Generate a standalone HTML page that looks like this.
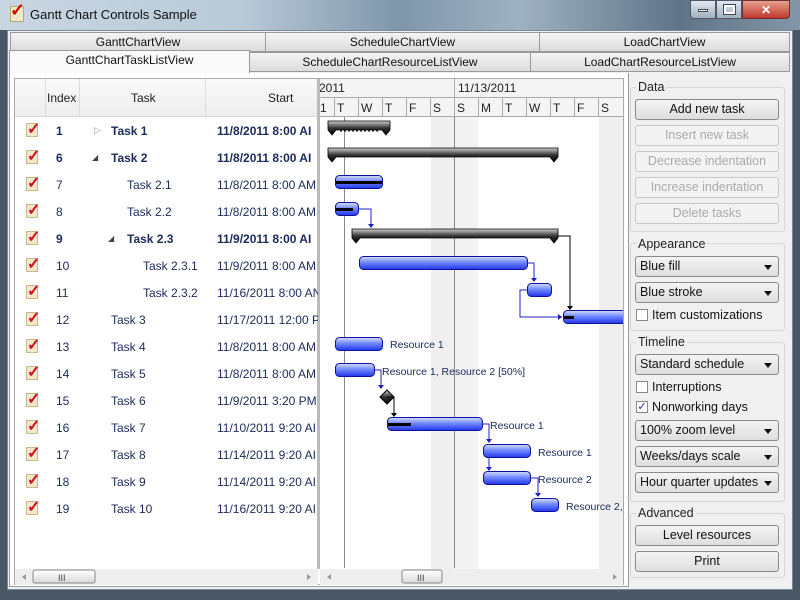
<!DOCTYPE html>
<html><head><meta charset="utf-8"><style>
*{margin:0;padding:0;box-sizing:border-box}
body{width:800px;height:600px;overflow:hidden;background:#4a5866;font-family:"Liberation Sans",sans-serif;font-size:12px;position:relative}
.abs{position:absolute}
.title{left:0;top:0;width:800px;height:30px;background:linear-gradient(90deg,#c9d6e2 0%,#b9cad8 30%,#7f96aa 50%,#9fb2c2 65%,#5f7488 85%,#8497a8 100%)}
.win{left:7px;top:30px;width:786px;height:560px;background:#f0f0f0;border:1px solid #7a8a9a}
.tab{position:absolute;height:20px;border:1px solid #999;background:linear-gradient(#f4f4f4,#dcdcdc);text-align:center;line-height:18px;font-size:12px;color:#111}
.btn{position:absolute;left:635px;width:144px;height:21px;border:1px solid #8a8a8a;border-radius:3px;background:linear-gradient(#f4f4f4,#dedede);text-align:center;line-height:19px;font-size:12.5px;color:#111}
.dis{color:#aaa;border-color:#c8c8c8;background:#f3f3f3}
.dd{text-align:left;padding-left:4px}
.dd:after{content:"";position:absolute;right:6px;top:8px;border:4px solid transparent;border-top:5px solid #111}
.grp{position:absolute;left:630px;width:155px;border:1px solid #d6d6d6;border-radius:3px}
.lbl{position:absolute;left:636px;font-size:12.5px;color:#222;background:#f0f0f0;padding:0 2px}
.cb{position:absolute;left:636px;width:12px;height:12px;border:1px solid #888;background:#fff}
.row{position:absolute;left:15px;width:303px;height:27px;font-size:12px;color:#1b2a5c;overflow:hidden}
.row span{position:absolute;top:7px;white-space:nowrap}
.b{font-weight:bold}
.chk{position:absolute;left:11px;top:6px;width:12px;height:14px;background:#f1e8c8;border:1px solid #c9b98a}
.chk:after{content:"✓";position:absolute;left:0;top:-5px;color:#d0102a;font-size:16px;font-weight:bold}
</style></head><body>
<div class="abs title"></div>
<div class="abs" style="left:10px;top:6px;width:14px;height:16px;background:#f1e8c8;border:1px solid #b9a870"></div>
<div class="abs" style="left:10px;top:0px;color:#c00;font-size:18px;font-weight:bold">✓</div>
<div class="abs" style="left:30px;top:7px;font-size:13px;color:#111">Gantt Chart Controls Sample</div>
<div class="abs" style="left:690px;top:0;width:26px;height:19px;border:1px solid #556;border-radius:0 0 0 4px;background:linear-gradient(#dfe8f0,#9fb0c0)"></div>
<div class="abs" style="left:716px;top:0;width:26px;height:19px;border:1px solid #556;background:linear-gradient(#dfe8f0,#9fb0c0)"></div>
<div class="abs" style="left:742px;top:0;width:48px;height:19px;border:1px solid #633;border-radius:0 0 4px 0;background:linear-gradient(#e8a090,#c0382a);color:#fff;text-align:center;font-weight:bold;line-height:18px">✕</div>
<div class="abs" style="left:698px;top:9px;width:10px;height:3px;background:#fff;border:1px solid #445"></div>
<div class="abs" style="left:724px;top:5px;width:11px;height:9px;border:2px solid #fff;outline:1px solid #445"></div>
<div class="abs win"></div>
<div class="tab" style="left:10px;top:32px;width:256px">GanttChartView</div>
<div class="tab" style="left:265px;top:32px;width:275px">ScheduleChartView</div>
<div class="tab" style="left:539px;top:32px;width:251px">LoadChartView</div>
<div class="tab" style="left:249px;top:52px;width:282px">ScheduleChartResourceListView</div>
<div class="tab" style="left:530px;top:52px;width:260px">LoadChartResourceListView</div>
<div class="tab" style="left:9px;top:50px;width:241px;height:24px;background:#fafafa;border-bottom:none">GanttChartTaskListView</div>
<div class="abs" style="left:9px;top:73px;width:620px;height:514px;border:1px solid #999;background:#fff;border-top:none"></div>
<div class="abs" style="left:14px;top:78px;width:610px;height:507px;border:1px solid #aaa;background:#fff"></div>
<div class="abs" style="left:15px;top:79px;width:303px;height:38px;background:linear-gradient(#fafafa,#ededed);border-bottom:1px solid #d8d8d8"></div>
<div class="abs" style="left:45px;top:79px;width:1px;height:38px;background:#ddd"></div>
<div class="abs" style="left:79px;top:79px;width:1px;height:38px;background:#ddd"></div>
<div class="abs" style="left:205px;top:79px;width:1px;height:38px;background:#ddd"></div>
<div class="abs" style="left:47px;top:91px;color:#222">Index</div>
<div class="abs" style="left:131px;top:91px;color:#222">Task</div>
<div class="abs" style="left:268px;top:91px;color:#222">Start</div>
<div class="abs" style="left:317px;top:79px;width:3px;height:490px;background:#bbb"></div>

<div class="row" style="top:117px"><div class="chk"></div><span class="b" style="left:41px">1</span><span style="left:79px;color:#999;font-size:9px;top:8px">▷</span><span class="b" style="left:96px">Task 1</span><span class="b" style="left:202px">11/8/2011 8:00 AI</span></div>
<div class="row" style="top:144px"><div class="chk"></div><span class="b" style="left:41px">6</span><span style="left:77px;color:#444;font-size:8px;top:9px">◢</span><span class="b" style="left:96px">Task 2</span><span class="b" style="left:202px">11/8/2011 8:00 AI</span></div>
<div class="row" style="top:171px"><div class="chk"></div><span style="left:41px">7</span><span style="left:112px">Task 2.1</span><span style="left:202px">11/8/2011 8:00 AM</span></div>
<div class="row" style="top:198px"><div class="chk"></div><span style="left:41px">8</span><span style="left:112px">Task 2.2</span><span style="left:202px">11/8/2011 8:00 AM</span></div>
<div class="row" style="top:225px"><div class="chk"></div><span class="b" style="left:41px">9</span><span style="left:93px;color:#444;font-size:8px;top:9px">◢</span><span class="b" style="left:112px">Task 2.3</span><span class="b" style="left:202px">11/9/2011 8:00 AI</span></div>
<div class="row" style="top:252px"><div class="chk"></div><span style="left:41px">10</span><span style="left:128px">Task 2.3.1</span><span style="left:202px">11/9/2011 8:00 AM</span></div>
<div class="row" style="top:279px"><div class="chk"></div><span style="left:41px">11</span><span style="left:128px">Task 2.3.2</span><span style="left:202px">11/16/2011 8:00 AN</span></div>
<div class="row" style="top:306px"><div class="chk"></div><span style="left:41px">12</span><span style="left:96px">Task 3</span><span style="left:202px">11/17/2011 12:00 P</span></div>
<div class="row" style="top:333px"><div class="chk"></div><span style="left:41px">13</span><span style="left:96px">Task 4</span><span style="left:202px">11/8/2011 8:00 AM</span></div>
<div class="row" style="top:360px"><div class="chk"></div><span style="left:41px">14</span><span style="left:96px">Task 5</span><span style="left:202px">11/8/2011 8:00 AM</span></div>
<div class="row" style="top:387px"><div class="chk"></div><span style="left:41px">15</span><span style="left:96px">Task 6</span><span style="left:202px">11/9/2011 3:20 PM</span></div>
<div class="row" style="top:414px"><div class="chk"></div><span style="left:41px">16</span><span style="left:96px">Task 7</span><span style="left:202px">11/10/2011 9:20 AI</span></div>
<div class="row" style="top:441px"><div class="chk"></div><span style="left:41px">17</span><span style="left:96px">Task 8</span><span style="left:202px">11/14/2011 9:20 AI</span></div>
<div class="row" style="top:468px"><div class="chk"></div><span style="left:41px">18</span><span style="left:96px">Task 9</span><span style="left:202px">11/14/2011 9:20 AI</span></div>
<div class="row" style="top:495px"><div class="chk"></div><span style="left:41px">19</span><span style="left:96px">Task 10</span><span style="left:202px">11/16/2011 9:20 AI</span></div>

<svg class="abs" style="left:0;top:0" width="800" height="600" font-family="Liberation Sans" font-size="12">
<defs>
<linearGradient id="bl" x1="0" y1="0" x2="0" y2="1"><stop offset="0" stop-color="#d6e0ff"/><stop offset="0.45" stop-color="#7088ff"/><stop offset="1" stop-color="#2236e8"/></linearGradient>
<linearGradient id="bk" x1="0" y1="0" x2="0" y2="1"><stop offset="0" stop-color="#d0d0d0"/><stop offset="0.5" stop-color="#333"/><stop offset="1" stop-color="#000"/></linearGradient>
<linearGradient id="sb" x1="0" y1="0" x2="0" y2="1"><stop offset="0" stop-color="#fff"/><stop offset="1" stop-color="#d8d8d8"/></linearGradient>
<clipPath id="cc"><rect x="320" y="79" width="303" height="490"/></clipPath>
</defs>
<g clip-path="url(#cc)">
<rect x="320" y="79" width="303" height="38" fill="#f4f4f4"/>
<line x1="320" y1="97.5" x2="623" y2="97.5" stroke="#aaa"/>
<line x1="320" y1="116.5" x2="623" y2="116.5" stroke="#aaa"/>
<text x="319" y="92" fill="#222">2011</text><text x="458" y="92" fill="#222">11/13/2011</text>
<line x1="454.5" y1="79" x2="454.5" y2="117" stroke="#aaa"/>
<g stroke="#aaa"><line x1="334.5" y1="98" x2="334.5" y2="117"/><line x1="358.5" y1="98" x2="358.5" y2="117"/><line x1="382.5" y1="98" x2="382.5" y2="117"/><line x1="406.5" y1="98" x2="406.5" y2="117"/><line x1="430.5" y1="98" x2="430.5" y2="117"/><line x1="478.5" y1="98" x2="478.5" y2="117"/><line x1="502.5" y1="98" x2="502.5" y2="117"/><line x1="526.5" y1="98" x2="526.5" y2="117"/><line x1="550.5" y1="98" x2="550.5" y2="117"/><line x1="574.5" y1="98" x2="574.5" y2="117"/><line x1="598.5" y1="98" x2="598.5" y2="117"/></g>
<g fill="#222"><text x="320" y="112">1</text><text x="337" y="112">T</text><text x="361" y="112">W</text><text x="385" y="112">T</text><text x="409" y="112">F</text><text x="433" y="112">S</text><text x="457" y="112">S</text><text x="481" y="112">M</text><text x="505" y="112">T</text><text x="529" y="112">W</text><text x="553" y="112">T</text><text x="577" y="112">F</text><text x="601" y="112">S</text></g>
<rect x="431" y="117" width="23" height="452" fill="#efefef"/>
<rect x="455" y="117" width="23" height="452" fill="#f3f3f3"/>
<rect x="599" y="117" width="24" height="452" fill="#efefef"/>
<line x1="344.5" y1="117" x2="344.5" y2="568" stroke="#888"/>
<line x1="454.5" y1="117" x2="454.5" y2="568" stroke="#888"/>
<g fill="url(#bk)" stroke="#000" stroke-width="0.8">
<path d="M328 121h62v9l-4 5-4-5h-46l-4 5-4-5z"/>
<path d="M328 148h230v9l-4 5-4-5h-214l-4 5-4-5z"/>
<path d="M352 229h206v9l-4 5-4-5h-190l-4 5-4-5z"/>
</g>
<line x1="340" y1="131" x2="380" y2="131" stroke="#000" stroke-dasharray="2,2"/>
<g fill="url(#bl)" stroke="#1010a0" stroke-width="1">
<rect x="335.5" y="175.5" width="47" height="13" rx="4"/>
<rect x="335.5" y="202.5" width="23" height="13" rx="4"/>
<rect x="359.5" y="256.5" width="168" height="13" rx="4"/>
<rect x="527.5" y="283.5" width="24" height="13" rx="4"/>
<rect x="563.5" y="310.5" width="70" height="13" rx="4"/>
<rect x="335.5" y="337.5" width="47" height="13" rx="4"/>
<rect x="335.5" y="363.5" width="39" height="13" rx="4"/>
<rect x="387.5" y="417.5" width="95" height="13" rx="4"/>
<rect x="483.5" y="444.5" width="47" height="13" rx="4"/>
<rect x="483.5" y="471.5" width="47" height="13" rx="4"/>
<rect x="531.5" y="498.5" width="27" height="13" rx="4"/>
</g>
<g fill="#000"><rect x="336" y="181" width="46" height="3"/><rect x="336" y="208" width="17" height="3"/><rect x="564" y="316" width="10" height="3"/><rect x="388" y="423" width="23" height="3"/></g>
<path d="M380 397l7-7 7 7-7 7z" fill="url(#bk)" stroke="#000"/>
<g stroke="#2020c0" fill="none"><path d="M358 209h13v18"/><path d="M527 263h7v18"/><path d="M527 290h-7v27h42"/><path d="M375 370h6v18"/><path d="M482 424h7v18"/><path d="M489 458v12"/><path d="M531 478h7v18"/></g>
<g stroke="#000" fill="none"><path d="M558 236h12v73"/><path d="M387 397h7v19"/></g>
<g fill="#2020c0"><path d="M368 224h6l-3 4z"/><path d="M531 278h6l-3 4z"/><path d="M558 314v6l4-3z"/><path d="M378 385h6l-3 4z"/><path d="M486 439h6l-3 4z"/><path d="M486 467h6l-3 4z"/><path d="M535 493h6l-3 4z"/></g>
<g fill="#000"><path d="M567 306h6l-3 4z"/><path d="M391 413h6l-3 4z"/></g>
<g fill="#1b2a5c" font-size="10.5"><text x="390" y="348">Resource 1</text><text x="382" y="375">Resource 1, Resource 2 [50%]</text><text x="490" y="429">Resource 1</text><text x="538" y="456">Resource 1</text><text x="538" y="483">Resource 2</text><text x="566" y="510">Resource 2,</text></g>
</g>
<rect x="15" y="569" width="303" height="16" fill="#eee"/>
<rect x="320" y="569" width="303" height="16" fill="#eee"/>
<rect x="33" y="570" width="62" height="13" rx="2" fill="url(#sb)" stroke="#888"/>
<rect x="402" y="570" width="40" height="13" rx="2" fill="url(#sb)" stroke="#888"/>
<text x="58" y="581" font-size="9" fill="#444">III</text><text x="417" y="581" font-size="9" fill="#444">III</text>
<g fill="#999"><path d="M22 577l4-3v6z"/><path d="M311 577l-4-3v6z"/><path d="M327 577l4-3v6z"/><path d="M617 577l-4-3v6z"/></g>
</svg>

<div class="grp" style="top:87px;height:145px"></div>
<div class="lbl" style="top:80px">Data</div>
<div class="btn" style="top:99px">Add new task</div>
<div class="btn dis" style="top:125px">Insert new task</div>
<div class="btn dis" style="top:151px">Decrease indentation</div>
<div class="btn dis" style="top:177px">Increase indentation</div>
<div class="btn dis" style="top:203px">Delete tasks</div>
<div class="grp" style="top:243px;height:88px"></div>
<div class="lbl" style="top:237px">Appearance</div>
<div class="btn dd" style="top:256px">Blue fill</div>
<div class="btn dd" style="top:282px">Blue stroke</div>
<div class="cb" style="top:309px"></div>
<div class="abs" style="left:652px;top:308px;font-size:12.5px;color:#111">Item customizations</div>
<div class="grp" style="top:342px;height:160px"></div>
<div class="lbl" style="top:335px">Timeline</div>
<div class="btn dd" style="top:354px">Standard schedule</div>
<div class="cb" style="top:381px"></div>
<div class="abs" style="left:652px;top:380px;font-size:12.5px;color:#111">Interruptions</div>
<div class="cb" style="top:401px;color:#1a2a8a;font-size:11px;line-height:10px;text-align:center">✓</div>
<div class="abs" style="left:652px;top:400px;font-size:12.5px;color:#111">Nonworking days</div>
<div class="btn dd" style="top:420px">100% zoom level</div>
<div class="btn dd" style="top:446px">Weeks/days scale</div>
<div class="btn dd" style="top:472px">Hour quarter updates</div>
<div class="grp" style="top:513px;height:65px"></div>
<div class="lbl" style="top:506px">Advanced</div>
<div class="btn" style="top:525px">Level resources</div>
<div class="btn" style="top:551px">Print</div>
</body></html>
